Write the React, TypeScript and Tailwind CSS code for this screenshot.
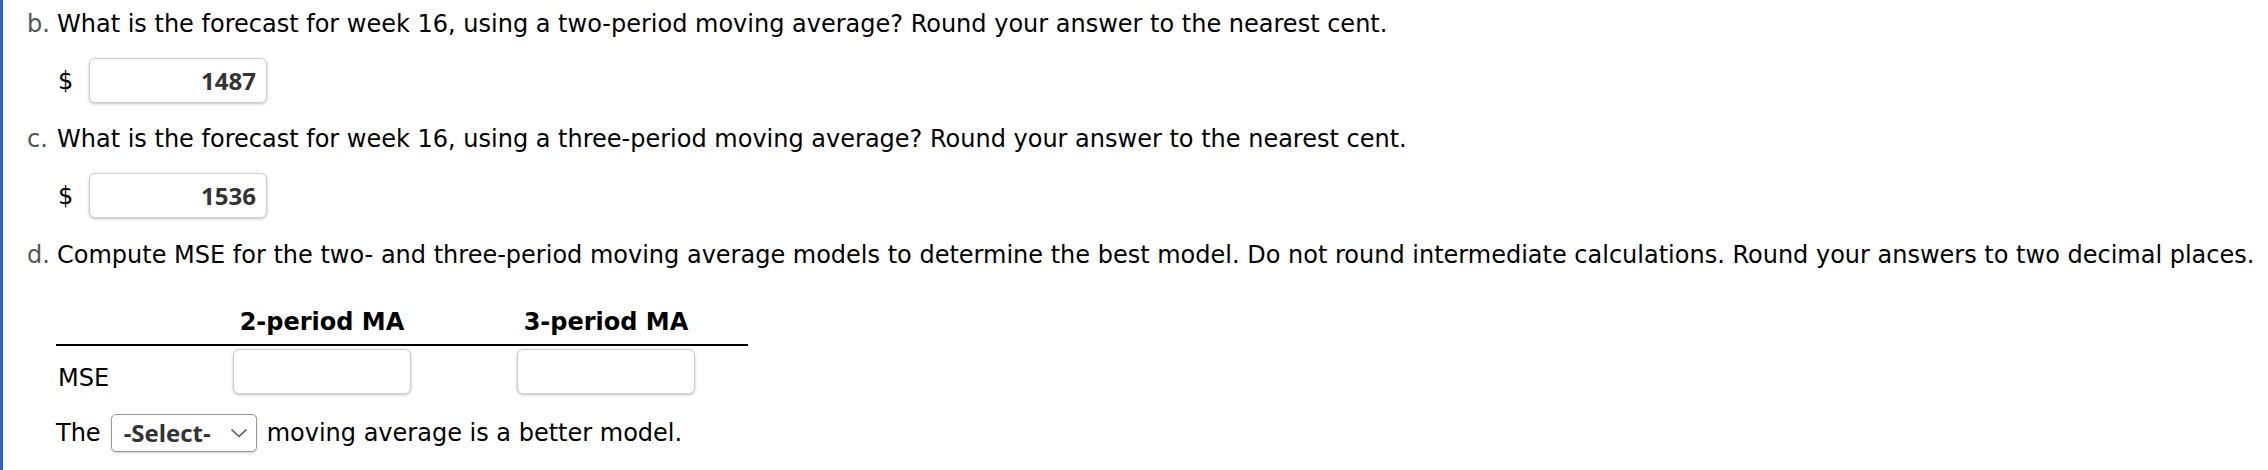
export default function App() {
  const text = "font-['DejaVu_Sans',Verdana,sans-serif] text-[24px] leading-[28px] text-black";
  const box =
    "h-[45px] w-[178px] rounded-[6px] border border-[#cfcfcf] bg-white shadow-[0_1px_3px_rgba(0,0,0,0.25)]";

  return (
    <div className="h-[470px] w-[2268px] overflow-hidden border-l-[3px] border-[#2a62d4] bg-white pl-[24px]">
      {/* b */}
      <p className={`${text} whitespace-nowrap pt-[10px]`}>
        <span className="inline-block w-[30px] text-[#555]">b.</span>
        What is the forecast for week 16, using a two-period moving average? Round your answer to the nearest cent.
      </p>
      <div className="mt-[20px] flex items-center pl-[31px]">
        <span className={`${text} w-[31px]`}>$</span>
        <div className={`${box} flex items-center justify-end pr-[10px]`}>
          <span className="font-['Open_Sans',sans-serif] text-[24px] font-bold text-[#333]">1487</span>
        </div>
      </div>

      {/* c */}
      <p className={`${text} mt-[22px] whitespace-nowrap`}>
        <span className="inline-block w-[30px] text-[#555]">c.</span>
        What is the forecast for week 16, using a three-period moving average? Round your answer to the nearest cent.
      </p>
      <div className="mt-[20px] flex items-center pl-[31px]">
        <span className={`${text} w-[31px]`}>$</span>
        <div className={`${box} flex items-center justify-end pr-[10px]`}>
          <span className="font-['Open_Sans',sans-serif] text-[24px] font-bold text-[#333]">1536</span>
        </div>
      </div>

      {/* d */}
      <p className={`${text} mt-[23px] whitespace-nowrap`}>
        <span className="inline-block w-[30px] text-[#555]">d.</span>
        Compute MSE for the two- and three-period moving average models to determine the best model. Do not round intermediate calculations. Round your answers to two decimal places.
      </p>

      <div className="ml-[29px] mt-[39px] w-[692px]">
        <div className={`${text} flex border-b-2 border-black pb-[8px] font-bold`}>
          <div className="w-[177px]" />
          <div className="w-[178px] text-center">2-period MA</div>
          <div className="w-[106px]" />
          <div className="w-[178px] text-center">3-period MA</div>
        </div>
        <div className="mt-[3px] flex items-center">
          <div className={`${text} w-[177px] pl-[2px] pt-[12px]`}>MSE</div>
          <div className={box} />
          <div className="w-[106px]" />
          <div className={box} />
        </div>
      </div>

      <div className={`${text} ml-[29px] mt-[20px] flex items-center whitespace-nowrap`}>
        <span>The</span>
        <div className="ml-[10px] flex h-[38px] w-[146px] items-center justify-between rounded-[5px] border border-[#9a9a9a] bg-white pl-[12px] pr-[8px] shadow-[0_1px_2px_rgba(0,0,0,0.2)]">
          <span className="font-['Open_Sans',sans-serif] text-[24px] font-bold text-[#333]">-Select-</span>
          <svg width="18" height="10" viewBox="0 0 18 10" fill="none">
            <path d="M1.5 1.5 L9 8.5 L16.5 1.5" stroke="#555" strokeWidth="1.6" />
          </svg>
        </div>
        <span className="ml-[10px]">moving average is a better model.</span>
      </div>
    </div>
  );
}
